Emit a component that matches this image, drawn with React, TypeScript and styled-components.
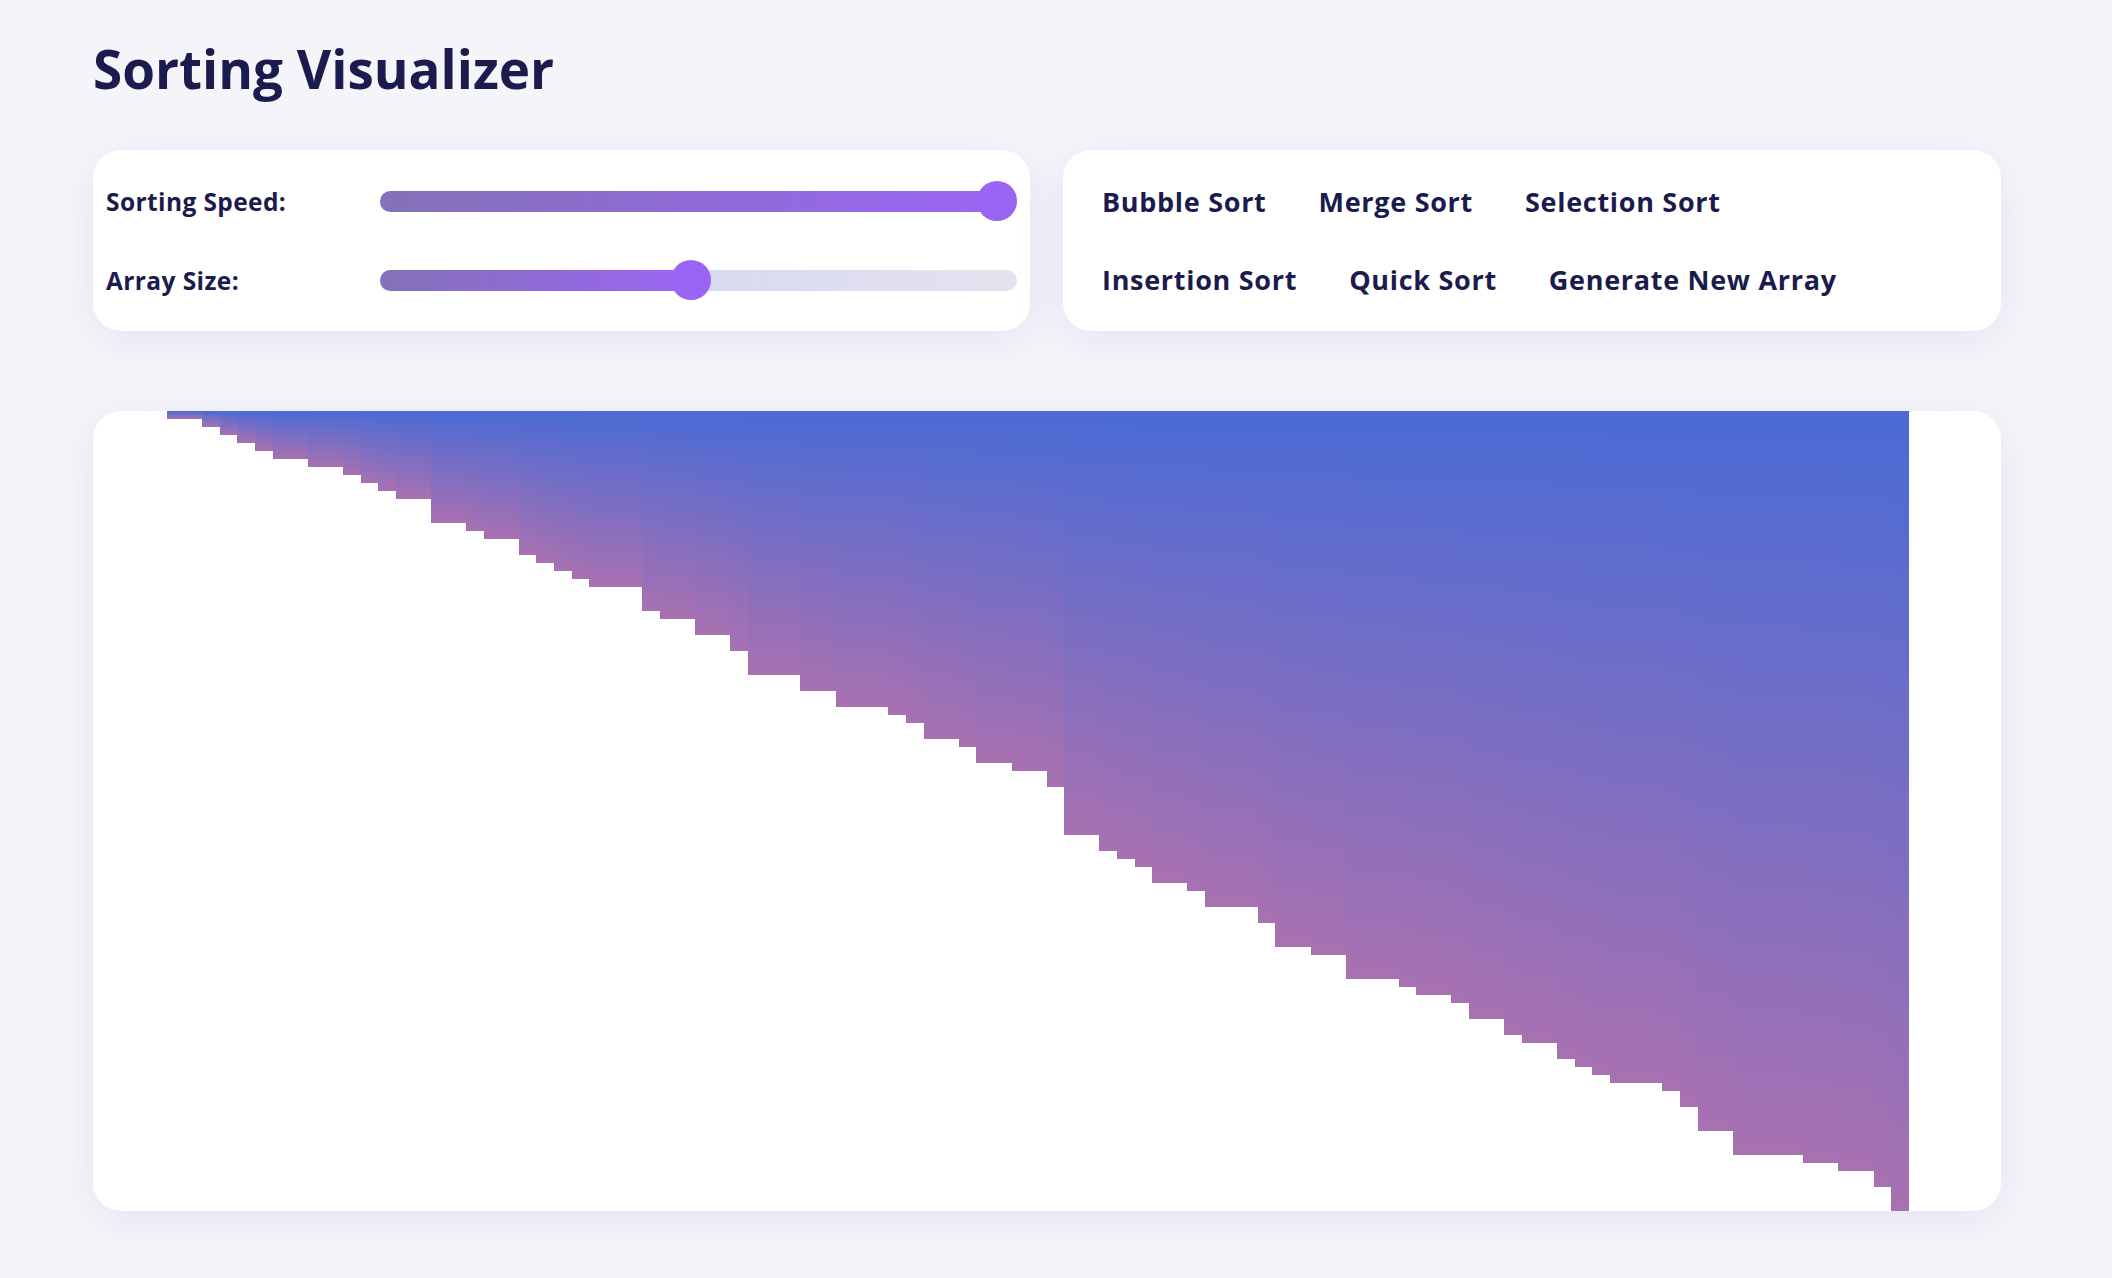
import React from "react";
import styled, { createGlobalStyle } from "styled-components";

const GlobalStyle = createGlobalStyle`
  html, body {
    margin: 0;
    padding: 0;
    background: #f5f5f9;
  }
  body {
    font-family: "Open Sans", "Noto Sans", sans-serif;
    color: #1b1c4d;
  }
  * { box-sizing: border-box; }
`;

const Page = styled.div`
  width: 2112px;
  min-height: 1278px;
  padding: 37px 111px 0 93px;
`;

const Title = styled.h1`
  margin: 0 0 49px 0;
  font-family: "Open Sans", sans-serif;
  font-weight: 700;
  font-size: 53px;
  line-height: 64px;
  letter-spacing: 0;
  color: #1b1c4d;
`;

const ControlsRow = styled.div`
  display: grid;
  grid-template-columns: 937px 938px;
  gap: 33px;
`;

const Card = styled.div`
  background: #ffffff;
  border-radius: 28px;
  box-shadow: 0 10px 44px rgba(170, 170, 230, 0.22);
`;

const SliderCard = styled(Card)`
  height: 181px;
  padding: 31px 13px 30px 13px;
  display: flex;
  flex-direction: column;
  gap: 39px;
`;

const SliderRow = styled.div`
  display: grid;
  grid-template-columns: 274px 1fr;
  align-items: center;
  height: 40px;
`;

const Label = styled.label`
  font-family: "Open Sans", sans-serif;
  font-weight: 700;
  font-size: 24.5px;
  letter-spacing: 0.4px;
  color: #1b1c4d;
`;

const Track = styled.div`
  position: relative;
  height: 21px;
  border-radius: 11px;
  background: linear-gradient(to right, #cfd0f3, #e3e3ef);
`;

const Fill = styled.div`
  position: absolute;
  left: 0;
  top: 0;
  bottom: 0;
  border-radius: 11px 0 0 11px;
  background: linear-gradient(to right, #8471b7, #9a66f3);
`;

const Thumb = styled.div`
  position: absolute;
  top: 50%;
  width: 40px;
  height: 40px;
  margin-top: -20px;
  margin-left: -20px;
  border-radius: 50%;
  background: #9966f3;
`;

const ButtonCard = styled(Card)`
  height: 181px;
  padding: 24px 13px 0 13px;
  display: flex;
  flex-direction: column;
  gap: 24px;
`;

const ButtonRow = styled.div`
  display: flex;
  align-items: center;
  height: 54px;
`;

const SortButton = styled.button`
  background: none;
  border: none;
  padding: 0 26px;
  height: 54px;
  font-family: "Open Sans", sans-serif;
  font-weight: 700;
  font-size: 27px;
  letter-spacing: 0.7px;
  color: #1b1c4d;
  cursor: pointer;
`;

const ChartCard = styled(Card)`
  margin-top: 80px;
  height: 800px;
  overflow: hidden;
  padding-left: 74px;
`;

const BarArea = styled.div`
  width: 1742px;
  height: 100%;
  display: flex;
  align-items: flex-start;
`;

const Bar = styled.div`
  flex: 1 1 0;
  background: linear-gradient(to bottom, #4a6bd5, #a871b1);
`;

const VALUES = [
  1, 1, 2, 3, 4, 5, 6, 6, 7, 7, 8, 9, 10, 11, 11, 14, 14, 15, 16, 16, 18, 19, 20, 21, 22, 22, 22, 25, 26, 26,
  28, 28, 30, 33, 33, 33, 35, 35, 37, 37, 37, 38, 39, 41, 41, 42, 44, 44, 45, 45, 47, 53, 53, 55, 56, 57, 59, 59, 60, 62, 62, 62, 64, 67, 67,
  68, 68, 71, 71, 71, 72, 73, 73, 74, 76, 76, 78, 79, 79, 81, 82, 83, 84, 84, 84, 85, 87, 90, 90, 93, 93, 93, 93, 94, 94, 95, 95, 97, 100,
];

function Slider({ fraction }: { fraction: number }) {
  const trackWidth = 637;
  const center = 20 + fraction * (trackWidth - 40);
  return (
    <Track>
      <Fill style={{ width: `${center}px` }} />
      <Thumb style={{ left: `${center}px` }} />
    </Track>
  );
}

export default function App() {
  return (
    <>
      <GlobalStyle />
      <Page>
        <Title>Sorting Visualizer</Title>
        <ControlsRow>
          <SliderCard>
            <SliderRow>
              <Label>Sorting Speed:</Label>
              <Slider fraction={1} />
            </SliderRow>
            <SliderRow>
              <Label>Array Size:</Label>
              <Slider fraction={0.487} />
            </SliderRow>
          </SliderCard>
          <ButtonCard>
            <ButtonRow>
              <SortButton>Bubble Sort</SortButton>
              <SortButton>Merge Sort</SortButton>
              <SortButton>Selection Sort</SortButton>
            </ButtonRow>
            <ButtonRow>
              <SortButton>Insertion Sort</SortButton>
              <SortButton>Quick Sort</SortButton>
              <SortButton>Generate New Array</SortButton>
            </ButtonRow>
          </ButtonCard>
        </ControlsRow>
        <ChartCard>
          <BarArea>
            {VALUES.map((v, i) => (
              <Bar key={i} style={{ height: `${v * 8}px` }} />
            ))}
          </BarArea>
        </ChartCard>
      </Page>
    </>
  );
}
